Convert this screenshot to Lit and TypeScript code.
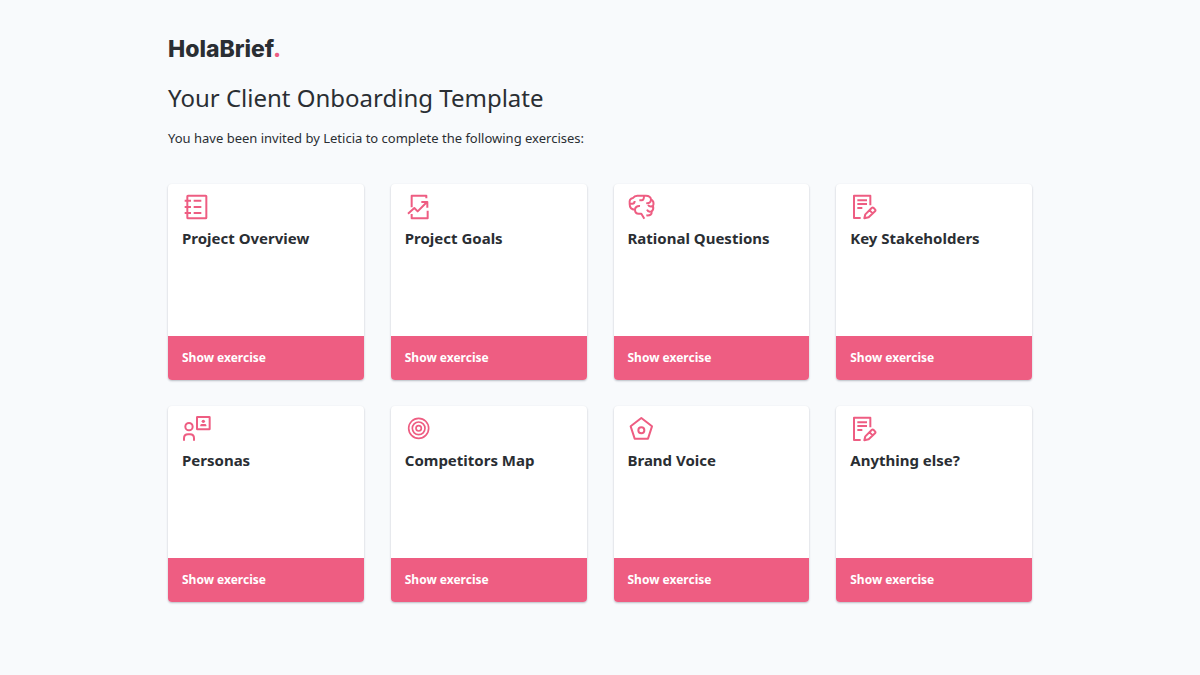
import { LitElement, html, css, svg } from "lit";
import { customElement } from "lit/decorators.js";

// Line icons, drawn on a 90-unit square.
const form = svg`
  <path d="M76 52V23H27V90H47M37 37H66M37 48H66M37 60H52"/>
  <path d="M58 91L61 79L80 60Q83 57 86 60L90 64Q93 67 90 70L71 88ZM74 67L83 76"/>`;

const icons = {
  notebook: svg`
    <rect x="34" y="23" width="57" height="68" rx="2"/>
    <path d="M26 38H45M26 57H45M26 75H45M53 38H76M53 57H76M53 75H76"/>`,
  goals: svg`
    <path d="M35 58V23H79V31M35 78V91H83V68"/>
    <path d="M24 77L43 60L53 70L81 42M64 42H82V59"/>`,
  brain: svg`
    <path d="M67 92L58 77H50C43 77 39 72 39 65C28 65 23 58 23 48C21 37 25 31 33 30C36 25 40 23 46 23H72C81 23 86 28 87 34C94 38 96 46 93 54C95 62 93 67 89 70C90 79 85 83 73 82"/>
    <path d="M23 47H31Q38 47 38 39M39 65C39 58 45 53 54 54M52 37H59Q66 37 66 24M87 34C87 43 81 47 73 45M93 54C87 57 81 55 78 51M89 70C83 72 77 70 75 65"/>`,
  form,
  persona: svg`
    <circle cx="39" cy="50" r="11"/>
    <path d="M24 92V85C24 77 29 73 36 73H42C49 73 54 77 54 85V92"/>
    <rect x="63" y="21" width="38" height="37" rx="1"/>
    <circle cx="82" cy="34" r="5" fill="currentColor" stroke="none"/>
    <path d="M73 49V46Q73 42 77 42H87Q91 42 91 46V49Z" fill="currentColor" stroke="none"/>`,
  target: svg`
    <g stroke-width="5">
      <circle cx="56" cy="55" r="30"/>
      <circle cx="56" cy="55" r="19"/>
      <circle cx="56" cy="55" r="8"/>
    </g>`,
  voice: svg`
    <path d="M58 24L90 49L78 86H38L26 49Z"/>
    <circle cx="58" cy="61" r="9"/>`,
};

const exercises: { title: string; icon: keyof typeof icons; box: string }[] = [
  { title: "Project Overview", icon: "notebook", box: "18 15 90 90" },
  { title: "Project Goals", icon: "goals", box: "15 15 90 90" },
  { title: "Rational Questions", icon: "brain", box: "18 15 90 90" },
  { title: "Key Stakeholders", icon: "form", box: "15 15 90 90" },
  { title: "Personas", icon: "persona", box: "18 15 90 90" },
  { title: "Competitors Map", icon: "target", box: "15 15 90 90" },
  { title: "Brand Voice", icon: "voice", box: "18 15 90 90" },
  { title: "Anything else?", icon: "form", box: "15 15 90 90" },
];

@customElement("app-root")
export class AppRoot extends LitElement {
  static styles = css`
    :host {
      display: block;
      box-sizing: border-box;
      min-height: 100vh;
      padding: 35px 24px;
      background: #f8fafc;
      color: #2a2e33;
      font-family: "Noto Sans", sans-serif;
    }
    .page {
      max-width: 864px;
      margin: 0 auto;
    }
    .logo {
      font: 800 23px/28px Inter, sans-serif;
    }
    .dot {
      color: #ee5d82;
    }
    .title {
      margin: 18px 0 0;
      font-size: 24px;
      font-weight: 400;
      line-height: 34px;
    }
    .intro {
      margin: 12px 0 35px;
      font-size: 13px;
      line-height: 22px;
    }
    .grid {
      display: grid;
      grid-template-columns: repeat(auto-fit, minmax(180px, 1fr));
      gap: 26px 27px;
    }
    .card {
      display: flex;
      flex-direction: column;
      overflow: hidden;
      border-radius: 4px;
      background: #fff;
      box-shadow: 0 1px 2px rgba(40, 50, 70, 0.3);
    }
    .body {
      min-height: 134px;
      padding: 9px 14px;
    }
    .icon {
      display: block;
      width: 30px;
      height: 30px;
      color: #ee5d82;
      fill: none;
      stroke: currentColor;
      stroke-width: 6;
      stroke-linejoin: round;
    }
    .name {
      margin: 3px 0 0;
      font-size: 15px;
      font-weight: 700;
      line-height: 24px;
      white-space: nowrap;
    }
    .show {
      padding: 12px 14px;
      border: 0;
      background: #ee5d82;
      color: #fff;
      font: 700 12px/20px "Noto Sans", sans-serif;
      text-align: left;
      cursor: pointer;
    }
  `;

  render() {
    return html`
      <main class="page">
        <div class="logo">HolaBrief<span class="dot">.</span></div>
        <h1 class="title">Your Client Onboarding Template</h1>
        <p class="intro">You have been invited by Leticia to complete the following exercises:</p>
        <div class="grid">
          ${exercises.map(
            (e) => html`<article class="card">
              <div class="body">
                <svg class="icon" viewBox=${e.box} overflow="visible" aria-hidden="true">${icons[e.icon]}</svg>
                <h2 class="name">${e.title}</h2>
              </div>
              <button class="show" type="button">Show exercise</button>
            </article>`
          )}
        </div>
      </main>
    `;
  }
}
